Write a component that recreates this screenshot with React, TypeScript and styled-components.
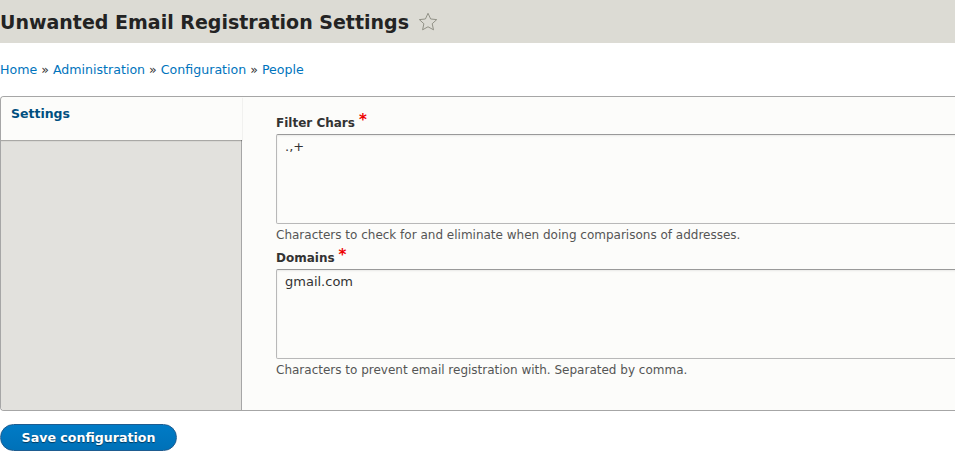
import React from "react";
import styled, { createGlobalStyle } from "styled-components";

const Global = createGlobalStyle`
  html, body { margin: 0; padding: 0; background: #ffffff; }
  body { font-family: "DejaVu Sans", "Liberation Sans", sans-serif; color: #333; overflow: hidden; }
  * { box-sizing: border-box; }
`;

const Page = styled.div`
  width: 955px;
  height: 473px;
  overflow: hidden;
`;

const Header = styled.div`
  background: #dcdbd4;
  height: 43px;
  display: flex;
  align-items: center;
  gap: 8px;
`;

const Title = styled.h1`
  margin: 0;
  font-size: 19px;
  font-weight: bold;
  color: #232323;
  white-space: nowrap;
`;

const Crumbs = styled.nav`
  font-size: 12.6px;
  color: #333;
  padding: 19px 0 0;
  height: 53px;
  line-height: 16px;
`;

const Crumb = styled.a`
  color: #0074bd;
  text-decoration: none;
`;

const Tabs = styled.div`
  display: flex;
  border: 1px solid #a6a6a6;
  border-right: none;
  border-radius: 4px 0 0 4px;
  height: 315px;
  width: 970px;
  background: #fcfcfa;
  overflow: hidden;
`;

const TabList = styled.div`
  width: 241px;
  flex: none;
  display: flex;
  flex-direction: column;
  background: #e2e1dd;
  border-right: 1px solid #a6a6a6;
`;

const Tab = styled.div<{ $active?: boolean }>`
  height: 43px;
  padding: 9px 10px;
  font-size: 12.5px;
  font-weight: bold;
  color: #004f80;
  background: ${(p) => (p.$active ? "#fcfcfa" : "transparent")};
  margin-right: ${(p) => (p.$active ? "-1px" : "0")};
  box-shadow: 0 1px 1px rgba(0, 0, 0, 0.25);
  position: relative;
`;

const Pane = styled.div`
  flex: 1;
  padding: 18px 0 0 34px;
  display: flex;
  flex-direction: column;
`;

const Field = styled.div`
  margin-bottom: 7px;
`;

const Label = styled.label`
  display: block;
  height: 17px;
  font-size: 12px;
  font-weight: bold;
  color: #333;
  line-height: 17px;
  margin-bottom: 2px;
`;

const Req = styled.span`
  color: #e00;
  font-size: 15px;
  line-height: 0;
  margin-left: 4px;
  vertical-align: 2px;
`;

const Area = styled.div`
  width: 700px;
  height: 90px;
  border: 1px solid #b8b8b8;
  border-top-color: #999;
  border-radius: 2px;
  background: #fcfcfa;
  padding: 4px 8px;
  font-size: 13px;
  color: #333;
  line-height: 16px;
  box-shadow: inset 0 1px 2px rgba(0, 0, 0, 0.08);
`;

const Desc = styled.div`
  font-size: 12px;
  color: #555;
  margin-top: 4px;
  line-height: 15px;
`;

const Actions = styled.div`
  padding-top: 13px;
`;

const Button = styled.button`
  height: 27px;
  width: 177px;
  border-radius: 14px;
  border: 1px solid #1e5c90;
  background: linear-gradient(#007bc6, #0071b8);
  color: #fff;
  font-family: "DejaVu Sans", "Liberation Sans", sans-serif;
  font-weight: bold;
  font-size: 12.6px;
  text-shadow: 0 1px 1px rgba(0, 0, 0, 0.5);
  padding: 0;
`;

const Star = () => (
  <svg width="22" height="22" viewBox="0 0 24 24" fill="none" stroke="#8a8a7f" strokeWidth="1" strokeLinejoin="round">
    <path d="M12 2.5l2.9 6.2 6.6.7-4.9 4.5 1.4 6.6L12 17.2l-5.9 3.3 1.4-6.6-4.9-4.5 6.6-.7z" />
  </svg>
);

export default function App() {
  return (
    <Page>
      <Global />
      <Header>
        <Title>Unwanted Email Registration Settings</Title>
        <Star />
      </Header>
      <Crumbs>
        <Crumb href="#">Home</Crumb> » <Crumb href="#">Administration</Crumb> »{" "}
        <Crumb href="#">Configuration</Crumb> » <Crumb href="#">People</Crumb>
      </Crumbs>
      <Tabs>
        <TabList>
          <Tab $active>Settings</Tab>
        </TabList>
        <Pane>
          <Field>
            <Label>
              Filter Chars<Req>*</Req>
            </Label>
            <Area>.,+</Area>
            <Desc>Characters to check for and eliminate when doing comparisons of addresses.</Desc>
          </Field>
          <Field>
            <Label>
              Domains<Req>*</Req>
            </Label>
            <Area>gmail.com</Area>
            <Desc>Characters to prevent email registration with. Separated by comma.</Desc>
          </Field>
        </Pane>
      </Tabs>
      <Actions>
        <Button>Save configuration</Button>
      </Actions>
    </Page>
  );
}
